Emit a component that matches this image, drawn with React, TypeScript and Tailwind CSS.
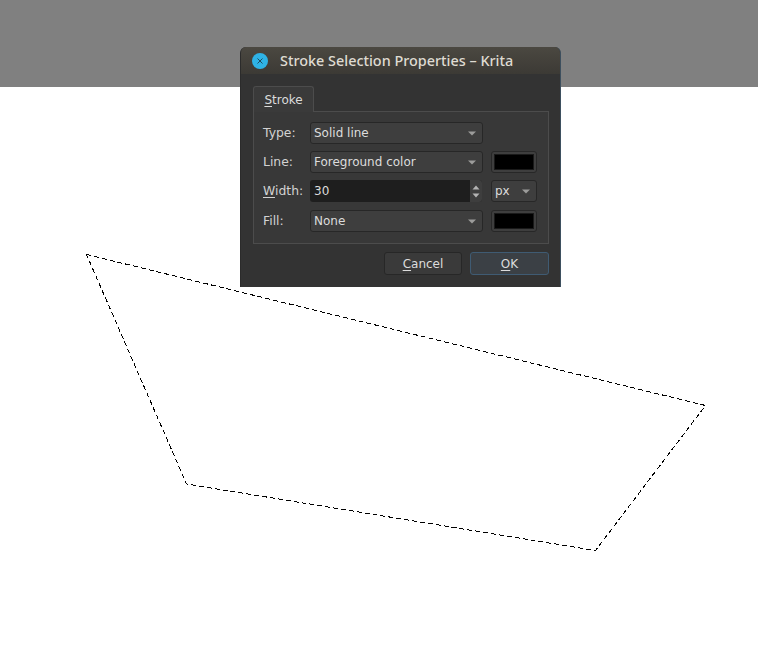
import React from "react";

const Caret = () => (
  <svg width="8" height="5" viewBox="0 0 8 5" className="shrink-0">
    <path d="M0 0.5H8L4 4.5Z" fill="#9c9c9b" />
  </svg>
);

const Combo = ({ text, className }: { text: string; className: string }) => (
  <div className={`h-[22px] flex items-center justify-between pl-[3px] pr-[6px] rounded-[3px] border border-[#272727] bg-[#3e3e3e] text-[#dcdcdc] ${className}`}>
    <span>{text}</span>
    <Caret />
  </div>
);

const Swatch = () => (
  <div className="w-[46px] h-[22px] rounded-[3px] border border-[#272727] bg-[#3e3e3e] p-[2px]">
    <div className="w-full h-full bg-black border border-[#1a1a1a]" />
  </div>
);

const Label = ({ children }: { children: React.ReactNode }) => (
  <div className="w-[47px] text-[12.4px] text-[#d2d2d2]">{children}</div>
);

export default function App() {
  return (
    <div className="relative w-[758px] h-[669px] bg-white overflow-hidden">
      <div className="h-[87px] bg-[#808080]" />
      <svg className="absolute left-0 top-0" width="758" height="669" shapeRendering="crispEdges">
        <polygon
          points="86.5,254.5 705.5,405.5 595.5,550.5 186.5,484"
          fill="none"
          stroke="#000"
          strokeWidth="1"
          strokeDasharray="5 3"
        />
      </svg>
      <div
        className="absolute left-[240px] top-[47px] w-[321px] h-[240px] flex flex-col bg-[#333333] rounded-t-[6px] overflow-hidden border-l border-r border-l-[#2b2b2b] border-r-[#3d4f5e] text-[12px] leading-[16px] text-[#dcdcdc]"
        style={{ fontFamily: '"DejaVu Sans", sans-serif' }}
      >
        <div className="h-[27px] shrink-0 flex items-center pl-[11px] bg-gradient-to-b from-[#4b4841] to-[#3c3a35]">
          <div className="w-[16px] h-[16px] rounded-full bg-[#2fb3e6] flex items-center justify-center">
            <svg width="6" height="6" viewBox="0 0 6 6">
              <path d="M0.5 0.5L5.5 5.5M5.5 0.5L0.5 5.5" stroke="#1d4a5e" strokeWidth="1" />
            </svg>
          </div>
          <span
            className="ml-[12px] text-[14.4px] font-medium text-[#dfdbd2]"
            style={{ fontFamily: '"Noto Sans", sans-serif' }}
          >
            Stroke Selection Properties – Krita
          </span>
        </div>
        <div className="flex-1 flex flex-col pt-[12px] pl-[12px] pr-[11px]">
          <div className="w-[61px] h-[26px] flex items-center justify-center border border-b-0 border-[#4c4c4c] rounded-t-[3px] bg-[#3a3a3a] -mb-px relative z-10 text-[#dcdcdc]">
            <span><span className="underline underline-offset-2">S</span>troke</span>
          </div>
          <div className="h-[133px] border border-[#4c4c4c] bg-[#383838] pt-[10px] pl-[9px] flex flex-col gap-[7px]">
            <div className="flex items-center">
              <Label>Type:</Label>
              <Combo text="Solid line" className="w-[173px]" />
            </div>
            <div className="flex items-center gap-[8px]">
              <div className="flex items-center">
                <Label>Line:</Label>
                <Combo text="Foreground color" className="w-[173px]" />
              </div>
              <Swatch />
            </div>
            <div className="flex items-center gap-[8px]">
              <div className="flex items-center">
                <Label><span className="underline underline-offset-2">W</span>idth:</Label>
                <div className="w-[172px] mr-px h-[22px] flex items-center justify-between rounded-[3px] bg-[#1e1e1e] pl-[4px] text-[#dcdcdc]">
                  <span>30</span>
                  <div className="w-[12px] h-full bg-[#3e3e3e] flex flex-col items-center justify-center gap-[3px] rounded-r-[3px]">
                    <svg width="8" height="5" viewBox="0 0 8 5"><path d="M0.5 4.5H7.5L4 0.5Z" fill="#b4b4b4" /></svg>
                    <svg width="8" height="5" viewBox="0 0 8 5"><path d="M0.5 0.5H7.5L4 4.5Z" fill="#b4b4b4" /></svg>
                  </div>
                </div>
              </div>
              <Combo text="px" className="w-[46px]" />
            </div>
            <div className="flex items-center gap-[8px] mt-px">
              <div className="flex items-center">
                <Label>Fill:</Label>
                <Combo text="None" className="w-[173px]" />
              </div>
              <Swatch />
            </div>
          </div>
          <div className="flex justify-end gap-[8px] mt-[8px]">
            <div className="w-[78px] h-[23px] flex items-center justify-center rounded-[3px] border border-[#272727] bg-[#3a3a3a] text-[#dcdcdc]">
              <span><span className="underline underline-offset-2">C</span>ancel</span>
            </div>
            <div className="w-[79px] h-[23px] flex items-center justify-center rounded-[3px] border border-[#3f5b73] bg-[#3b4045] text-[#dcdcdc]">
              <span><span className="underline underline-offset-2">O</span>K</span>
            </div>
          </div>
        </div>
      </div>
    </div>
  );
}
